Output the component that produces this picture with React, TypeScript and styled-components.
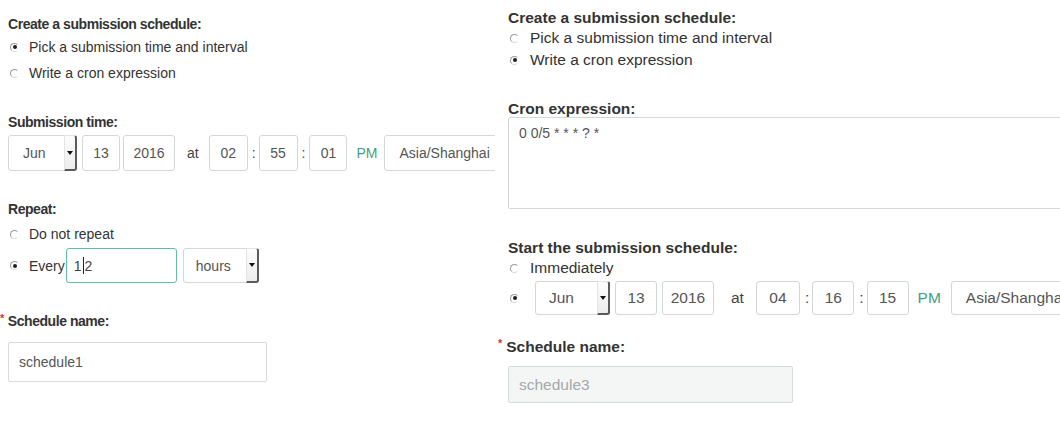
import { createGlobalStyle } from 'styled-components';
import styled from 'styled-components';

const GlobalStyle = createGlobalStyle`
  html, body {
    margin: 0;
    padding: 0;
    background: #fff;
  }
  body {
    font-family: "Liberation Sans", Arial, Helvetica, sans-serif;
    font-size: 14px;
    color: #333;
  }
`;

const Page = styled.div`
  display: flex;
  width: 1060px;
  height: 423px;
  overflow: hidden;
  background: #fff;
`;

const LeftPanel = styled.div`
  width: 495px;
  flex-shrink: 0;
  box-sizing: border-box;
  padding: 16px 0 0 8px;
  overflow: hidden;
  font-size: 14px;
`;

// the right capture is a little larger
const RightPanel = styled.div`
  flex: 1;
  min-width: 0;
  box-sizing: border-box;
  padding: 9px 0 0 13px;
  overflow: hidden;
  font-size: 15.5px;
`;

const Label = styled.div<{ $mt?: number; $tight?: boolean }>`
  font-weight: bold;
  line-height: 17px;
  color: #333;
  white-space: nowrap;
  margin-top: ${p => p.$mt ?? 0}px;
  letter-spacing: ${p => (p.$tight ? '-0.45px' : '0')};
`;

const RequiredLabel = styled(Label)<{ $shift: number }>`
  margin-left: -${p => p.$shift}px;
  display: flex;
  align-items: flex-start;
`;

const Star = styled.span<{ $gap: number }>`
  color: #e0302c;
  font-size: 11px;
  line-height: 11px;
  margin-right: ${p => p.$gap}px;
`;

const RadioRow = styled.div<{ $h: number; $gap: number; $mt?: number; $indent?: number }>`
  display: flex;
  align-items: center;
  height: ${p => p.$h}px;
  gap: ${p => p.$gap}px;
  margin-top: ${p => p.$mt ?? 0}px;
  padding-left: ${p => p.$indent ?? 2}px;
  white-space: nowrap;
  color: #333;
`;

const Radio = styled.span<{ $checked?: boolean }>`
  position: relative;
  flex-shrink: 0;
  width: 7px;
  height: 7px;
  border-radius: 50%;
  border: 1px solid #9a9a9a;
  border-right-color: transparent;
  border-bottom-color: #d8d8d8;

  &::after {
    content: '';
    display: ${p => (p.$checked ? 'block' : 'none')};
    position: absolute;
    left: 1.5px;
    top: 1.5px;
    width: 4px;
    height: 4px;
    border-radius: 50%;
    background: #1e1e1e;
  }
`;

const FieldRow = styled.div<{ $h: number; $mt?: number }>`
  display: flex;
  align-items: center;
  height: ${p => p.$h}px;
  margin-top: ${p => p.$mt ?? 0}px;
  white-space: nowrap;
`;

const Box = styled.div<{ $w: number; $h: number; $ml?: number }>`
  box-sizing: border-box;
  flex-shrink: 0;
  width: ${p => p.$w}px;
  height: ${p => p.$h}px;
  margin-left: ${p => p.$ml ?? 0}px;
  border: 1px solid #d2d7d7;
  border-radius: 3px;
  background: #fff;
  color: #555;
  display: flex;
  align-items: center;
  justify-content: center;
`;

const WideBox = styled(Box)`
  justify-content: flex-start;
  padding-left: 14px;
`;

const FocusedInput = styled(Box)`
  border-color: #5fbfa6;
  justify-content: flex-start;
  padding-left: 7px;
  color: #444;
`;

const Caret = styled.span`
  display: inline-block;
  width: 1px;
  height: 17px;
  background: #222;
  margin: 0 1px;
`;

const Sep = styled.span<{ $ml: number; $color?: string }>`
  margin-left: ${p => p.$ml}px;
  color: ${p => p.$color ?? '#444'};
  flex-shrink: 0;
`;

const Select = styled.div<{ $w: number; $h: number; $ml?: number }>`
  box-sizing: border-box;
  flex-shrink: 0;
  display: flex;
  width: ${p => p.$w}px;
  height: ${p => p.$h}px;
  margin-left: ${p => p.$ml ?? 0}px;
  border: 1px solid #d2d7d7;
  border-radius: 3px;
  background: #fff;
`;

const SelectText = styled.span<{ $pl: number }>`
  flex: 1;
  display: flex;
  align-items: center;
  padding-left: ${p => p.$pl}px;
  color: #555;
`;

const SelectButton = styled.span`
  position: relative;
  width: 10px;
  margin: -1px -1px -1px 0;
  border-left: 1px solid #e4e4e4;
  border-right: 2px solid #5a5a5a;
  border-bottom: 2px solid #5a5a5a;
  border-top: 1px solid #e4e4e4;
  border-radius: 0 3px 3px 0;
  background: linear-gradient(#fdfdfd, #ececec);

  &::after {
    content: '';
    position: absolute;
    left: 2px;
    top: 50%;
    margin-top: -2px;
    border-left: 3px solid transparent;
    border-right: 3px solid transparent;
    border-top: 4px solid #111;
  }
`;

const CronArea = styled.div`
  box-sizing: border-box;
  width: 620px;
  height: 92px;
  border: 1px solid #d2d7d7;
  border-radius: 2px;
  padding: 7px 10px;
  font-size: 14px;
  line-height: 16px;
  color: #555;
  white-space: pre;
`;

const NameInput = styled.div<{ $w: number; $h: number; $disabled?: boolean }>`
  box-sizing: border-box;
  width: ${p => p.$w}px;
  height: ${p => p.$h}px;
  border: 1px solid #d5dada;
  border-radius: 2px;
  background: ${p => (p.$disabled ? '#f4f6f6' : '#fff')};
  color: ${p => (p.$disabled ? '#a4a9a9' : '#555')};
  display: flex;
  align-items: center;
  padding-left: 10px;
`;

const NameBlock = styled.div<{ $mt: number }>`
  margin-top: ${p => p.$mt}px;
`;

const InputWrap = styled.div<{ $mt: number }>`
  margin-top: ${p => p.$mt}px;
`;

export default function App() {
  return (
    <>
      <GlobalStyle />
      <Page>
        <LeftPanel>
          <Label $tight>Create a submission schedule:</Label>
          <RadioRow $h={26} $gap={10} $mt={1}>
            <Radio $checked />
            Pick a submission time and interval
          </RadioRow>
          <RadioRow $h={26} $gap={10}>
            <Radio />
            Write a cron expression
          </RadioRow>

          <Label $tight $mt={28}>Submission time:</Label>
          <FieldRow $h={36} $mt={4}>
            <Select $w={69} $h={36}>
              <SelectText $pl={14}>Jun</SelectText>
              <SelectButton />
            </Select>
            <Box $w={38} $h={36} $ml={5}>13</Box>
            <Box $w={52} $h={36} $ml={3}>2016</Box>
            <Sep $ml={12}>at</Sep>
            <Box $w={39} $h={36} $ml={10}>02</Box>
            <Sep $ml={4}>:</Sep>
            <Box $w={39} $h={36} $ml={3}>55</Box>
            <Sep $ml={4}>:</Sep>
            <Box $w={38} $h={36} $ml={4}>01</Box>
            <Sep $ml={9} $color="#3f9f81">PM</Sep>
            <WideBox $w={140} $h={36} $ml={7}>Asia/Shanghai</WideBox>
          </FieldRow>

          <Label $tight $mt={30}>Repeat:</Label>
          <RadioRow $h={24} $gap={10} $mt={4}>
            <Radio />
            Do not repeat
          </RadioRow>
          <RadioRow $h={35} $gap={10} $mt={2}>
            <Radio $checked />
            Every
            <FocusedInput $w={111} $h={35} $ml={-9}>
              1<Caret />2
            </FocusedInput>
            <Select $w={76} $h={35} $ml={-4}>
              <SelectText $pl={12}>hours</SelectText>
              <SelectButton />
            </Select>
          </RadioRow>

          <NameBlock $mt={30}>
            <RequiredLabel $tight $shift={8}>
              <Star $gap={4}>*</Star>
              Schedule name:
            </RequiredLabel>
            <InputWrap $mt={12}>
              <NameInput $w={259} $h={40}>schedule1</NameInput>
            </InputWrap>
          </NameBlock>
        </LeftPanel>

        <RightPanel>
          <Label>Create a submission schedule:</Label>
          <RadioRow $h={22} $gap={11} $mt={1} $indent={2}>
            <Radio />
            Pick a submission time and interval
          </RadioRow>
          <RadioRow $h={22} $gap={11} $indent={2}>
            <Radio $checked />
            Write a cron expression
          </RadioRow>

          <Label $mt={29}>Cron expression:</Label>
          <CronArea>0 0/5 * * * ? *</CronArea>

          <Label $mt={30}>Start the submission schedule:</Label>
          <RadioRow $h={22} $gap={11} $mt={1} $indent={2}>
            <Radio />
            Immediately
          </RadioRow>
          <RadioRow $h={34} $gap={0} $mt={2} $indent={2}>
            <Radio $checked />
            <Select $w={75} $h={34} $ml={16}>
              <SelectText $pl={13}>Jun</SelectText>
              <SelectButton />
            </Select>
            <Box $w={42} $h={34} $ml={5}>13</Box>
            <Box $w={52} $h={34} $ml={5}>2016</Box>
            <Sep $ml={17}>at</Sep>
            <Box $w={44} $h={34} $ml={12}>04</Box>
            <Sep $ml={5}>:</Sep>
            <Box $w={42} $h={34} $ml={3}>16</Box>
            <Sep $ml={5}>:</Sep>
            <Box $w={42} $h={34} $ml={3}>15</Box>
            <Sep $ml={9} $color="#3f9f81">PM</Sep>
            <WideBox $w={140} $h={34} $ml={10}>Asia/Shanghai</WideBox>
          </RadioRow>

          <NameBlock $mt={23}>
            <RequiredLabel $shift={10}>
              <Star $gap={4}>*</Star>
              Schedule name:
            </RequiredLabel>
            <InputWrap $mt={11}>
              <NameInput $w={285} $h={37} $disabled>schedule3</NameInput>
            </InputWrap>
          </NameBlock>
        </RightPanel>
      </Page>
    </>
  );
}
